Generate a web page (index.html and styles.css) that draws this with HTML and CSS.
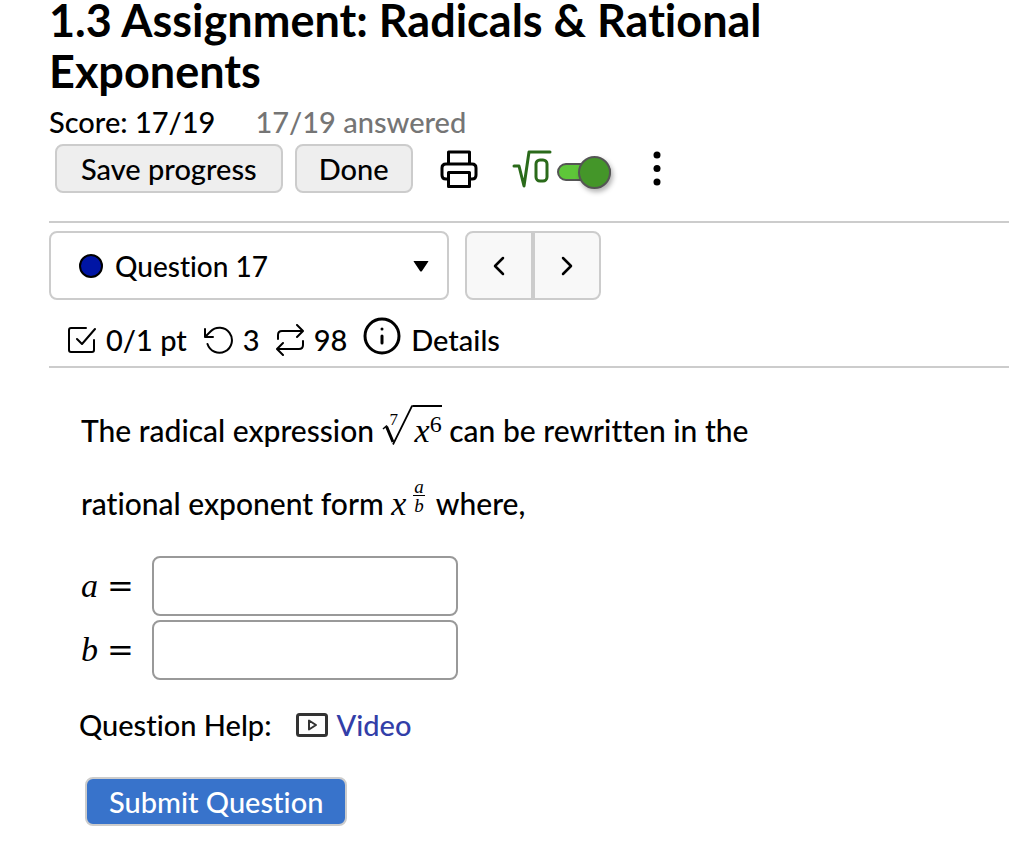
FILE: index.html
```html
<!DOCTYPE html>
<html lang="en">
<head>
    <meta charset="utf-8">
    <title>1.3 Assignment: Radicals &amp; Rational Exponents</title>
    <link rel="stylesheet" href="styles.css">
</head>
<body>
    <main class="assessment">
        <h1>1.3 Assignment: Radicals &amp; Rational Exponents</h1>
        <div class="score">
            <span>Score: 17/19</span>
            <span class="answered">17/19 answered</span>
        </div>

        <div class="toolbar">
            <button class="btn" type="button">Save progress</button>
            <button class="btn" type="button">Done</button>
            <button class="icon-btn print" type="button" aria-label="Print">
                <svg width="38" height="38" viewBox="0 0 38 38" fill="none" stroke="#000" stroke-width="3" stroke-linejoin="round">
                    <path d="M8.500 14V2h21v12M8 29H6q-4 0-4-4v-7q0-4 4-4h26q4 0 4 4v7q0 4-4 4h-2"/>
                    <path d="M8.500 22.500h21V36.500h-21z"/>
                </svg>
            </button>
            <label class="equation-toggle">
                <svg width="40" height="38" viewBox="0 0 40 38" fill="none" stroke="#2a6a1a" stroke-width="3" stroke-linecap="round" stroke-linejoin="round">
                    <path d="M2 16h5l5 20 5-34h21"/>
                    <rect x="24" y="10" width="11" height="21" rx="4"/>
                </svg>
                <input type="checkbox" class="switch" aria-label="Equation editor" checked>
            </label>
            <button class="icon-btn more" type="button" aria-label="More options">
                <svg width="8" height="36" viewBox="0 0 8 36">
                    <circle cx="4" cy="4" r="3.500"/>
                    <circle cx="4" cy="17.500" r="3.500"/>
                    <circle cx="4" cy="31" r="3.500"/>
                </svg>
            </button>
        </div>

        <nav class="question-nav">
            <div class="question-select">
                <span class="dot"></span>
                <select aria-label="Question">
                    <option>Question 17</option>
                </select>
                <svg width="16" height="12" viewBox="0 0 16 12"><path d="M1 1h14q1 0 0 1L9 11q-1 1-2 0L1 2q-1-1 0-1z"/></svg>
            </div>
            <div class="pager">
                <button type="button" aria-label="Previous question">
                    <svg width="12" height="20" viewBox="0 0 12 20" fill="none" stroke="#000" stroke-width="2.500" stroke-linecap="round" stroke-linejoin="round"><path d="M10 2L2 10l8 8"/></svg>
                </button>
                <button type="button" aria-label="Next question">
                    <svg width="12" height="20" viewBox="0 0 12 20" fill="none" stroke="#000" stroke-width="2.500" stroke-linecap="round" stroke-linejoin="round"><path d="M2 2l8 8-8 8"/></svg>
                </button>
            </div>
        </nav>

        <div class="info">
            <span class="info-item">
                <svg width="29" height="28" viewBox="0 0 29 28" fill="none" stroke="#000" stroke-width="2" stroke-linecap="round" stroke-linejoin="round">
                    <path d="M19 2H4Q2 2 2 4v20q0 2 2 2h21q2 0 2-2V14"/>
                    <path d="M10 13l5 5L28 3"/>
                </svg>
                0/1 pt
            </span>
            <span class="info-item">
                <svg width="30" height="28" viewBox="0 0 30 28" fill="none" stroke="#000" stroke-width="2" stroke-linecap="round" stroke-linejoin="round">
                    <path d="M2 3v8h8M2 11L7.500 5.500A12.500 12.500 0 1 1 4.500 18"/>
                </svg>
                3
            </span>
            <span class="info-item">
                <svg width="28" height="32" viewBox="0 0 28 32" fill="none" stroke="#000" stroke-width="2" stroke-linecap="round" stroke-linejoin="round">
                    <path d="M2 15v-4q0-4 4-4h20M21 1l6 6-6 6"/>
                    <path d="M27 17v4q0 4-4 4H2M7 19l-6 6 6 6"/>
                </svg>
                98
            </span>
            <button class="details" type="button">
                <svg width="38" height="38" viewBox="0 0 38 38" fill="none" stroke="#000" stroke-width="3" stroke-linecap="round">
                    <circle cx="19" cy="19" r="17"/>
                    <path d="M19 19v7M19 12v.1"/>
                </svg>
                Details
            </button>
        </div>

        <form class="question">
            <p>The radical expression
                <span class="math root"><span class="index">7</span><svg class="surd" width="31" height="42" viewBox="0 0 31 42" fill="none" stroke="#000"><path stroke-width="1.500" d="M1 24l4-3.500"/><path stroke-width="3" d="M4.500 21.500L11 37"/><path stroke-width="1.700" stroke-linejoin="bevel" d="M11 39.500L30 1h1"/></svg><span class="radicand"><i>x</i><sup>6</sup></span></span>
                can be rewritten in the rational exponent form
                <span class="math"><i>x</i><span class="fraction"><i>a</i><i>b</i></span></span>
                where,</p>

            <div class="answer">
                <label class="math" for="answer-a"><i>a</i><span class="equals">=</span></label>
                <input type="text" id="answer-a">
            </div>
            <div class="answer">
                <label class="math" for="answer-b"><i>b</i><span class="equals">=</span></label>
                <input type="text" id="answer-b">
            </div>

            <div class="help">
                <span>Question Help:</span>
                <a href="#">
                    <svg width="32" height="24" viewBox="0 0 32 24" fill="none" stroke="#333" stroke-width="3" stroke-linejoin="round">
                        <rect x="1.500" y="1.500" width="29" height="21" rx="2"/>
                        <path stroke-width="2" d="M13 7.500v9l7-4.500z"/>
                    </svg>
                    Video
                </a>
            </div>
            <button class="btn submit" type="button">Submit Question</button>
        </form>
    </main>
</body>
</html>
```
FILE: styles.css
```css
* {
    box-sizing: border-box;
}

body {
    margin: 0;
    background: #fff;
    color: #000;
    font-family: "Trebuchet MS", Lato, sans-serif;
    font-size: 29px;
    font-weight: 500;
    font-variant-ligatures: none;
    line-height: 34px;
}

button, input, select {
    font: inherit;
    font-variant-ligatures: none;
    color: inherit;
}

button {
    cursor: pointer;
}

svg {
    display: block;
    flex: none;
}

.assessment {
    display: flow-root;
    margin: 0 15px 0 49px;
}

h1 {
    margin: -5px 0 8px;
    max-width: 760px;
    font-size: 45px;
    line-height: 51px;
}

.score {
    display: flex;
    gap: 40px;
}

.answered {
    color: #757575;
}

/* Toolbar */
.toolbar {
    display: flex;
    align-items: center;
    height: 51px;
    padding-left: 6px;
    margin: 4px 0 27px;
}

.btn {
    height: 49px;
    padding: 0 24px;
    border: 2px solid #ccc;
    border-radius: 8px;
    background: #eee;
}

.btn + .btn {
    padding: 0 22px;
    margin-left: 12px;
}

.icon-btn {
    padding: 0;
    border: 0;
    background: none;
}

.print {
    margin-left: 27px;
}

.equation-toggle {
    display: flex;
    align-items: center;
    gap: 5px;
    margin-left: 34px;
}

.switch {
    appearance: none;
    position: relative;
    width: 54px;
    height: 18px;
    margin: 6px 0 0;
    border: 2px solid #555;
    border-radius: 9px;
    background: #5ec639;
}

.switch::before {
    content: "";
    position: absolute;
    top: -9px;
    right: -2px;
    width: 33px;
    height: 33px;
    box-sizing: border-box;
    border: 2px solid #555;
    border-radius: 50%;
    background: #449629;
    box-shadow: 2px 3px 5px rgba(0, 0, 0, 0.3);
}

.more {
    margin-left: 42px;
}

/* Question navigation */
.question-nav {
    display: flex;
    gap: 16px;
    padding-top: 8px;
    border-top: 2px solid #ccc;
}

.question-select {
    display: flex;
    align-items: center;
    width: 400px;
    height: 69px;
    padding: 0 18px 0 28px;
    border: 2px solid #ccc;
    border-radius: 8px;
    font-size: 28px;
}

.dot {
    width: 24px;
    height: 24px;
    margin-right: 12px;
    border: 2px solid #000;
    border-radius: 50%;
    background: #0015a5;
}

.question-select select {
    appearance: none;
    flex: 1;
    padding: 0;
    border: 0;
    background: none;
}

.pager {
    display: flex;
}

.pager button {
    display: flex;
    align-items: center;
    justify-content: center;
    width: 68px;
    padding: 0;
    border: 2px solid #ccc;
    border-radius: 8px 0 0 8px;
    background: #f8f8f8;
}

.pager button + button {
    border-radius: 0 8px 8px 0;
}

/* Points, attempts and details */
.info {
    display: flex;
    align-items: center;
    gap: 16px;
    height: 68px;
    padding: 14px 0 0 18px;
    border-bottom: 2px solid #ccc;
}

.info-item, .details {
    display: flex;
    align-items: center;
    gap: 10px;
}

.details {
    padding: 0;
    border: 0;
    background: none;
}

.details svg {
    margin-bottom: 8px;
}

/* Question body */
.question {
    padding: 26px 0 0 32px;
}

.question p {
    max-width: 720px;
    margin: 0 0 16px;
    font-size: 30px;
    line-height: 73px;
}

.math {
    font-family: "Liberation Serif", serif;
    font-size: 34px;
    font-weight: 400;
    line-height: 36px;
    white-space: nowrap;
}

.root {
    position: relative;
    display: inline-flex;
    align-items: baseline;
}

.index {
    position: absolute;
    top: 6px;
    left: 8px;
    font-size: 17px;
    line-height: 17px;
}

.surd {
    align-self: flex-start;
}

.radicand {
    height: 44px;
    padding: 6px 0 0 2px;
    border-top: 2px solid #000;
}

.radicand sup {
    font-size: 24px;
    line-height: 0;
    vertical-align: 10px;
}

.fraction {
    display: inline-flex;
    flex-direction: column;
    margin: 0 4px 0 7px;
    font-size: 19px;
    line-height: 17px;
    text-align: center;
    vertical-align: 22px;
}

.fraction i + i {
    padding: 1px 1px 0;
    border-top: 1px solid #000;
}

.equals {
    margin-left: 9px;
    font-family: "DejaVu Serif", serif;
    font-size: 32px;
}

.answer {
    display: flex;
    align-items: center;
    gap: 18px;
    margin-bottom: 4px;
}

.answer input {
    width: 306px;
    height: 60px;
    padding: 0 12px;
    border: 2px solid #999;
    border-radius: 8px;
    background: #fff;
}

.help {
    display: flex;
    gap: 24px;
    margin: 28px 0 35px -2px;
}

.help a {
    display: flex;
    align-items: center;
    gap: 9px;
    color: #323ea8;
    text-decoration: none;
}

.submit {
    padding: 0 22px;
    margin-left: 4px;
    background: #3873cb;
    color: #fff;
}
```
